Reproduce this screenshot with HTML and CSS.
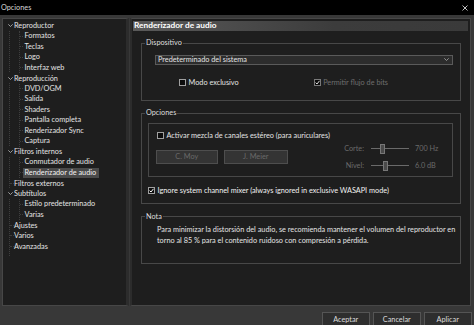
FILE: index.html
```html
<!DOCTYPE html>
<html>
    <head>
        <meta charset="utf-8">
        <title>Opciones</title>
        <link rel="stylesheet" href="styles.css">
    </head>
    <body>
        <div class="titlebar">
            <span class="title">Opciones</span>
            <svg class="close" width="6" height="6" viewBox="0 0 6 6"><path d="M0.5 0.5 L5.5 5.5 M5.5 0.5 L0.5 5.5" stroke="#d8d8d8" stroke-width="0.9" fill="none"/></svg>
        </div>

        <div class="main">
            <div class="tree">
                <ul class="top">
                    <li>
                        <div class="row"><span class="twisty open"><svg width="5" height="3" viewBox="0 0 5 3"><path d="M0.3 0.3 L2.5 2.5 L4.7 0.3" stroke="#bbb" stroke-width="0.8" fill="none"/></svg></span><span class="txt">Reproductor</span></div>
                        <ul class="kids">
                            <li class="row"><span class="txt">Formatos</span></li>
                            <li class="row"><span class="txt">Teclas</span></li>
                            <li class="row"><span class="txt">Logo</span></li>
                            <li class="row"><span class="txt">Interfaz web</span></li>
                        </ul>
                    </li>
                    <li>
                        <div class="row"><span class="twisty open"><svg width="5" height="3" viewBox="0 0 5 3"><path d="M0.3 0.3 L2.5 2.5 L4.7 0.3" stroke="#bbb" stroke-width="0.8" fill="none"/></svg></span><span class="txt">Reproducción</span></div>
                        <ul class="kids">
                            <li class="row"><span class="txt">DVD/OGM</span></li>
                            <li class="row"><span class="txt">Salida</span></li>
                            <li class="row"><span class="txt">Shaders</span></li>
                            <li class="row"><span class="txt">Pantalla completa</span></li>
                            <li class="row"><span class="txt">Renderizador Sync</span></li>
                            <li class="row"><span class="txt">Captura</span></li>
                        </ul>
                    </li>
                    <li>
                        <div class="row"><span class="twisty open"><svg width="5" height="3" viewBox="0 0 5 3"><path d="M0.3 0.3 L2.5 2.5 L4.7 0.3" stroke="#bbb" stroke-width="0.8" fill="none"/></svg></span><span class="txt">Filtros internos</span></div>
                        <ul class="kids">
                            <li class="row"><span class="txt">Conmutador de audio</span></li>
                            <li class="row"><span class="txt sel">Renderizador de audio</span></li>
                        </ul>
                    </li>
                    <li><div class="row"><span class="twisty leaf"></span><span class="txt">Filtros externos</span></div></li>
                    <li>
                        <div class="row"><span class="twisty open"><svg width="5" height="3" viewBox="0 0 5 3"><path d="M0.3 0.3 L2.5 2.5 L4.7 0.3" stroke="#bbb" stroke-width="0.8" fill="none"/></svg></span><span class="txt">Subtítulos</span></div>
                        <ul class="kids">
                            <li class="row"><span class="txt">Estilo predeterminado</span></li>
                            <li class="row"><span class="txt">Varias</span></li>
                        </ul>
                    </li>
                    <li><div class="row"><span class="twisty leaf"></span><span class="txt">Ajustes</span></div></li>
                    <li><div class="row"><span class="twisty leaf"></span><span class="txt">Varios</span></div></li>
                    <li><div class="row"><span class="twisty leaf"></span><span class="txt">Avanzadas</span></div></li>
                </ul>
            </div>

            <div class="page">
                <div class="heading">Renderizador de audio</div>

                <fieldset class="group dev">
                    <legend>Dispositivo</legend>
                    <div class="combo">
                        <span>Predeterminado del sistema</span>
                        <svg width="5" height="3" viewBox="0 0 5 3"><path d="M0.3 0.3 L2.5 2.5 L4.7 0.3" stroke="#aaa" stroke-width="0.8" fill="none"/></svg>
                    </div>
                    <div class="checks">
                        <label class="check excl"><span class="box"></span>Modo exclusivo</label>
                        <label class="check bits off"><span class="box on"><svg width="5" height="5" viewBox="0 0 5 5"><path d="M0.6 2.6 L2 4 L4.5 0.8" stroke="#ddd" stroke-width="1" fill="none"/></svg></span>Permitir flujo de bits</label>
                    </div>
                </fieldset>

                <fieldset class="group opts">
                    <legend>Opciones</legend>
                    <div class="inner">
                        <label class="check"><span class="box"></span>Activar mezcla de canales estéreo (para auriculares)</label>
                        <div class="mixrow">
                            <div class="presets">
                                <span class="btn dis">C. Moy</span>
                                <span class="btn dis wide">J. Meier</span>
                            </div>
                            <div class="sliders">
                                <div class="slider">
                                    <span class="lbl">Corte:</span>
                                    <span class="track"><span class="thumb" style="margin-left: 9px"></span></span>
                                    <span class="val">700 Hz</span>
                                </div>
                                <div class="slider">
                                    <span class="lbl">Nivel:</span>
                                    <span class="track"><span class="thumb" style="margin-left: 12px"></span></span>
                                    <span class="val">6.0 dB</span>
                                </div>
                            </div>
                        </div>
                    </div>
                    <label class="check ignore"><span class="box on"><svg width="5" height="5" viewBox="0 0 5 5"><path d="M0.6 2.6 L2 4 L4.5 0.8" stroke="#fff" stroke-width="1" fill="none"/></svg></span>Ignore system channel mixer (always ignored in exclusive WASAPI mode)</label>
                </fieldset>

                <fieldset class="group note">
                    <legend>Nota</legend>
                    <p>Para minimizar la distorsión del audio, se recomienda mantener el volumen del reproductor en<br>torno al 85 % para el contenido ruidoso con compresión a pérdida.</p>
                </fieldset>
            </div>
        </div>

        <div class="bottom">
            <span class="btn">Aceptar</span>
            <span class="btn">Cancelar</span>
            <span class="btn">Aplicar</span>
        </div>
    </body>
</html>
```
FILE: styles.css
```css
* {box-sizing: border-box;}
ul {list-style: none; margin: 0; padding: 0;}
p {margin: 0;}

body {
    margin: 0;
    width: 474px;
    height: 325px;
    overflow: hidden;
    background-color: #383838;
    font-family: Lato, "Liberation Sans", sans-serif;
    font-size: 7.3px;
    color: #e4e4e4;
}

.titlebar {
    height: 15px;
    background-color: #000;
    display: flex;
    align-items: center;
    justify-content: space-between;
    padding: 0 6px 0 1px;
    color: #d6d6d6;
}

.main {
    height: 291px;
    display: flex;
    gap: 1px;
    padding: 3px 3px 0 2px;
}

/* left tree */
.tree {
    width: 127px;
    background-color: #1e1e1e;
    border: 1px solid #474747;
    border-right: 3px solid #2c2c2c;
    padding-top: 1.5px;
}
.top {margin-left: 5.5px; border-left: 1px dotted #3e3e3e; height: 235px;}
.row {height: 10.5px; display: flex; align-items: center; white-space: nowrap;}
.twisty {width: 5px; height: 10px; display: flex; align-items: center;}
.twisty.open {background-color: #1e1e1e; margin-left: -3px; width: 7.5px; justify-content: center;}
.twisty.leaf {border-top: 1px dotted #3e3e3e; height: 0; width: 4.5px;}
.kids {margin-left: 9px; border-left: 1px dotted #3e3e3e;}
.kids .row::before {
    content: "";
    width: 3px;
    border-top: 1px dotted #3e3e3e;
}
.kids .txt {padding: 0 2px; line-height: 10px;}
.kids .txt.sel {background-color: #4a4a4a; color: #f2f2f2; padding-right: 3px;}

/* right page */
.page {
    flex: 1;
    background-color: #1e1e1e;
    border: 1px solid #474747;
    border-left: 2px solid #2c2c2c;
    padding: 2px 2px 0 1px;
}
.heading {
    height: 9.5px;
    line-height: 9.5px;
    font-size: 8.3px;
    font-weight: bold;
    padding-left: 1px;
    color: #fff;
    background: linear-gradient(to right, #5a5a5a, #3c3c3c 60%, #3a3a3a);
}

.group {
    margin: 7.5px 7px 0 8px;
    padding: 0;
    border: 1px solid #484848;
    min-width: 0;
}
.group legend {
    padding: 0 1px;
    margin-left: 3px;
    line-height: 10px;
    color: #dedede;
}

.combo {
    margin: 6.5px 7px 0 13px;
    height: 10.5px;
    background-color: #2c2c2c;
    border: 1px solid #5a5a5a;
    display: flex;
    align-items: center;
    justify-content: space-between;
    padding: 0 3px 0 2px;
}
.checks {display: flex; margin-top: 12px; padding-bottom: 12.5px;}
.check {display: flex; align-items: center; height: 10px; white-space: nowrap;}
.check.excl {margin-left: 37px;}
.check.bits {margin-left: 75px;}
.check.off {color: #6e6e6e;}
.box {
    width: 7px;
    height: 7px;
    border: 1px solid #a0a0a0;
    background-color: #0c0c0c;
    margin-right: 2.5px;
    display: flex;
    align-items: center;
    justify-content: center;
}
.check.off .box {border-color: #7a7a7a;}

.inner {
    margin: 5px 7px 0 6px;
    border: 1px solid #484848;
    padding: 6px 2px 3.5px 8px;
    height: 54px;
}
.mixrow {display: flex; justify-content: space-between;}
.presets {display: flex; gap: 5.5px; margin-top: 10px; margin-left: -1.5px;}
.btn {
    display: flex;
    align-items: center;
    justify-content: center;
    width: 62.5px;
    height: 13.5px;
    border: 1px solid #5c5c5c;
    background-color: #333;
    color: #e4e4e4;
}
.btn.wide {width: 64.5px;}
.btn.dis {color: #6a6a6a; background-color: #343434; border-color: #4e4e4e;}
.slider {display: flex; align-items: center; height: 17.3px; color: #6a6a6a;}
.lbl {width: 24px; text-align: right;}
.track {
    width: 38px;
    height: 1px;
    background-color: #6a6a6a;
    margin: 0 6px 0 7px;
    display: flex;
    align-items: center;
}
.thumb {
    width: 4.5px;
    height: 10px;
    background-color: #4a4a4a;
    border: 1px solid #777;
    flex: none;
}
.val {width: 35px;}
.check.ignore {margin: 8px 0 8px 6px; color: #f2f2f2;}

.note p {
    padding: 3.75px 0 17px 15px;
    line-height: 10.5px;
    white-space: nowrap;
    color: #e4e4e4;
}

.bottom {
    height: 19px;
    display: flex;
    justify-content: flex-end;
    gap: 3.5px;
    padding: 5.5px 2.5px 0 0;
}
.bottom .btn {
    width: 47.5px;
    height: 16px;
    background-color: #2e2e2e;
    border-color: #555;
    color: #dcdcdc;
}
```
